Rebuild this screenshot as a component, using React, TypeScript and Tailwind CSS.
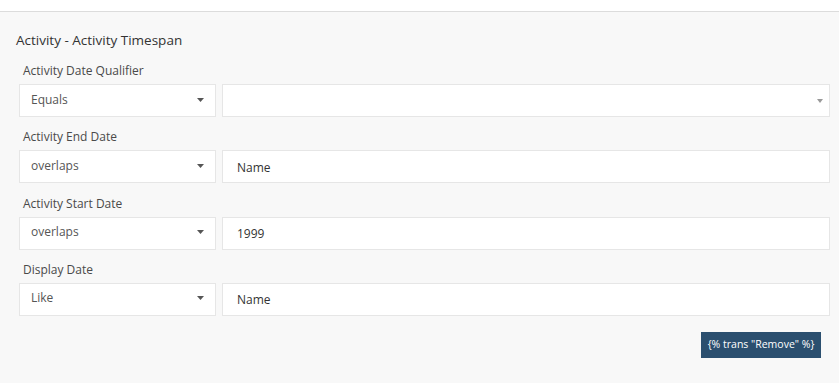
import React from "react";

const font = { fontFamily: '"Open Sans", "Noto Sans", sans-serif' };

function Caret({ small }: { small?: boolean }) {
  return small ? (
    <svg width="6" height="4" viewBox="0 0 6 4" className="block">
      <path d="M0 0 L6 0 L3 4 Z" fill="#999" />
    </svg>
  ) : (
    <svg width="7" height="4" viewBox="0 0 7 4" className="block">
      <path d="M0 0 L7 0 L3.5 4 Z" fill="#555" />
    </svg>
  );
}

function Row({
  label,
  op,
  value,
  placeholderSelect,
}: {
  label: string;
  op: string;
  value?: string;
  placeholderSelect?: boolean;
}) {
  return (
    <div className="flex flex-col">
      <div className="h-4 pl-1 text-[12px] leading-4 text-[#4a4a4a]">{label}</div>
      <div className="mt-[5px] flex gap-[6px]">
        <div className="flex h-[33px] w-[197px] items-center justify-between border border-[#e6e6e6] bg-white pl-[11px] pr-[11px] pb-[2px] text-[12px] text-[#555]">
          <span>{op}</span>
          <Caret />
        </div>
        {placeholderSelect ? (
          <div className="flex h-[33px] flex-1 items-center justify-end border border-[#e6e6e6] bg-white pr-[6px]">
            <Caret small />
          </div>
        ) : (
          <div className="flex h-[33px] flex-1 items-center border border-[#e6e6e6] bg-white pl-[14px] pt-[2px] text-[12px] text-[#333]">
            {value}
          </div>
        )}
      </div>
    </div>
  );
}

export default function App() {
  return (
    <div className="h-[383px] w-[839px] overflow-hidden bg-white" style={font}>
      <div className="h-[11px] bg-white" />
      <div className="h-[372px] border-t border-[#dcdcdc] bg-[#f8f8f8]">
        <div className="pl-4 pt-[18px] text-[13.5px] leading-5 text-[#333]">
          Activity - Activity Timespan
        </div>
        <div className="mt-[13px] flex flex-col gap-[12.3px] pl-[19px] pr-[9px]">
          <Row label="Activity Date Qualifier" op="Equals" placeholderSelect />
          <Row label="Activity End Date" op="overlaps" value="Name" />
          <Row label="Activity Start Date" op="overlaps" value="1999" />
          <Row label="Display Date" op="Like" value="Name" />
        </div>
        <div className="mt-[16px] flex justify-end pr-[18px]">
          <button className="flex h-[26px] w-[120px] items-center justify-center bg-[#2b4f6f] text-[10.5px] text-white">
            {'{% trans "Remove" %}'}
          </button>
        </div>
      </div>
    </div>
  );
}
